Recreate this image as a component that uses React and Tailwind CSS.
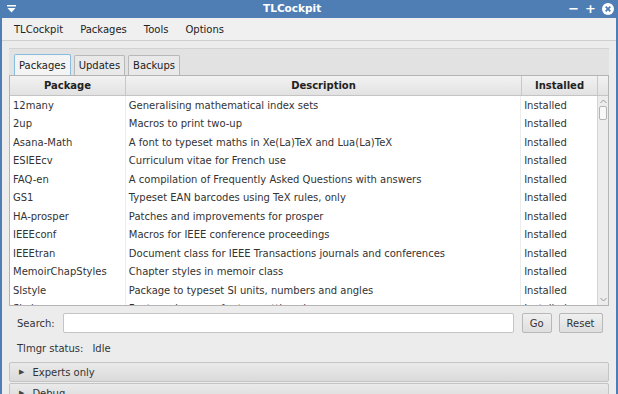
const rows = [
    ["12many", "Generalising mathematical index sets"],
    ["2up", "Macros to print two-up"],
    ["Asana-Math", "A font to typeset maths in Xe(La)TeX and Lua(La)TeX"],
    ["ESIEEcv", "Curriculum vitae for French use"],
    ["FAQ-en", "A compilation of Frequently Asked Questions with answers"],
    ["GS1", "Typeset EAN barcodes using TeX rules, only"],
    ["HA-prosper", "Patches and improvements for prosper"],
    ["IEEEconf", "Macros for IEEE conference proceedings"],
    ["IEEEtran", "Document class for IEEE Transactions journals and conferences"],
    ["MemoirChapStyles", "Chapter styles in memoir class"],
    ["SIstyle", "Package to typeset SI units, numbers and angles"],
    ["Skak", "Fonts and macros for typesetting chess games"],
];

const font = { fontFamily: '"DejaVu Sans", sans-serif' };

const App = () => {
    return (
        <div
            className="w-[618px] h-[394px] overflow-hidden bg-[#4f7eb5] px-[2px] text-[10px] text-[#333] flex flex-col"
            style={font}
        >
            <div className="h-[18px] flex items-center text-white shrink-0">
                <svg className="ml-[5px] shrink-0" width="9" height="8" viewBox="0 0 9 8">
                    <rect x="0" y="0" width="9" height="1.5" fill="white" />
                    <path d="M0.5 3 L8.5 3 L4.5 7.5 Z" fill="white" />
                </svg>
                <div className="flex-1 text-center font-bold text-[10.5px]">TLCockpit</div>
                <div className="flex items-center gap-[6px] mr-[2px] font-bold text-[13px]">
                    <span>−</span>
                    <span>+</span>
                    <svg width="12" height="12" viewBox="0 0 12 12">
                        <circle cx="6" cy="6" r="6" fill="white" />
                        <path d="M3.7 3.7 L8.3 8.3 M8.3 3.7 L3.7 8.3" stroke="#4f7eb5" strokeWidth="1.8" />
                    </svg>
                </div>
            </div>
            <div className="flex-1 bg-[#ececec] flex flex-col">
                <div className="h-[23px] flex items-center gap-[17px] px-[12px] text-[#222] bg-[#f0f0f0] border-b border-[#cfcfcf] shrink-0">
                    <span>TLCockpit</span>
                    <span>Packages</span>
                    <span>Tools</span>
                    <span>Options</span>
                </div>
                <div className="mx-[7px] mt-[7px] bg-[#e2e2e2] border-t border-[#d2d2d2] flex flex-col">
                    <div className="h-[26px] flex items-end gap-[3px] px-[5px]">
                        <div className="h-[21px] px-[4px] flex items-center bg-[#f4f4f4] border-[1.5px] border-b-0 border-[#86bde0] rounded-t-[2px] text-[#222]">Packages</div>
                        <div className="h-[20px] px-[4px] flex items-center bg-[#e9e9e9] border border-b-0 border-[#b8b8b8] rounded-t-[2px] text-[#222]">Updates</div>
                        <div className="h-[20px] px-[4px] flex items-center bg-[#e9e9e9] border border-b-0 border-[#b8b8b8] rounded-t-[2px] text-[#222]">Backups</div>
                    </div>
                    <div className="h-[231px] border border-[#b4b4b4] bg-white flex flex-col overflow-hidden">
                        <div className="h-[20px] flex shrink-0 bg-gradient-to-b from-[#f2f2f2] to-[#e2e2e2] border-b border-[#c4c4c4] font-bold text-[#222]">
                            <div className="w-[116px] border-r border-[#c8c8c8] flex items-center justify-center">Package</div>
                            <div className="w-[396px] border-r border-[#c8c8c8] flex items-center justify-center">Description</div>
                            <div className="w-[76px] border-r border-[#c8c8c8] flex items-center justify-center">Installed</div>
                            <div className="flex-1"></div>
                        </div>
                        <div className="flex flex-1 overflow-hidden">
                            <div className="flex-1 overflow-hidden">
                                {rows.map(([name, desc]) => (
                                    <div key={name} className="h-[18.5px] flex items-center">
                                        <div className="w-[116px] h-full border-r border-[#ececec] pl-[3px] flex items-center whitespace-nowrap overflow-hidden">{name}</div>
                                        <div className="w-[396px] h-full border-r border-[#ececec] pl-[3px] flex items-center whitespace-nowrap overflow-hidden">{desc}</div>
                                        <div className="w-[76px] h-full pl-[3px] flex items-center">Installed</div>
                                    </div>
                                ))}
                            </div>
                            <div className="w-[11px] bg-[#ececec] border-l border-[#d4d4d4] flex flex-col items-center">
                                <svg className="mt-[3px]" width="7" height="5" viewBox="0 0 7 5">
                                    <path d="M0.5 4 L3.5 1 L6.5 4" fill="none" stroke="#999" strokeWidth="1" />
                                </svg>
                                <div className="mt-[2px] w-[8px] h-[14px] bg-[#f8f8f8] border border-[#b4b4b4] rounded-[2px]"></div>
                                <svg className="mt-auto mb-[3px]" width="7" height="5" viewBox="0 0 7 5">
                                    <path d="M0.5 1 L3.5 4 L6.5 1" fill="none" stroke="#999" strokeWidth="1" />
                                </svg>
                            </div>
                        </div>
                    </div>
                </div>
                <div className="mt-[7px] flex items-center pl-[15px] h-[20px]">
                    <span className="mr-[8px]">Search:</span>
                    <div className="w-[451px] h-[20px] bg-white border border-[#c4c4c4] rounded-[2px]"></div>
                    <div className="ml-[8px] h-[20px] px-[7px] flex items-center bg-gradient-to-b from-[#f0f0f0] to-[#dedede] border border-[#b8b8b8] rounded-[2px]">Go</div>
                    <div className="ml-[7px] h-[20px] px-[7px] flex items-center bg-gradient-to-b from-[#f0f0f0] to-[#dedede] border border-[#b8b8b8] rounded-[2px]">Reset</div>
                </div>
                <div className="mt-[6px] h-[18px] pl-[15px] flex items-center gap-[9px]">
                    <span>Tlmgr status:</span>
                    <span>Idle</span>
                </div>
                <div className="mt-[5px] mx-[7px] h-[20px] flex items-center pl-[9px] bg-gradient-to-b from-[#eaeaea] to-[#dadada] border border-[#c4c4c4] rounded-[2px] shrink-0">
                    <span className="text-[7px] mr-[8px] text-[#444]">▶</span>
                    <span>Experts only</span>
                </div>
                <div className="mt-[1px] mx-[7px] h-[20px] flex items-center pl-[9px] bg-gradient-to-b from-[#eaeaea] to-[#dadada] border border-[#c4c4c4] rounded-[2px] shrink-0">
                    <span className="text-[7px] mr-[8px] text-[#444]">▶</span>
                    <span>Debug</span>
                </div>
            </div>
        </div>
    );
};

export default App;
